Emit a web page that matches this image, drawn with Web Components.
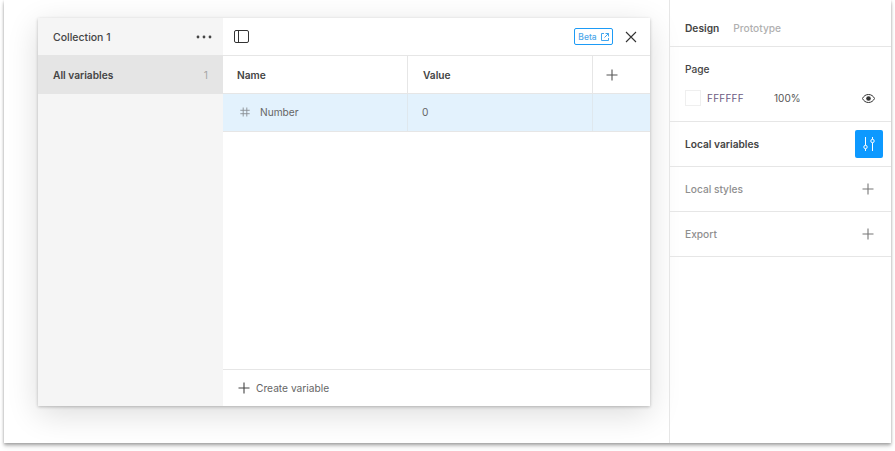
<!DOCTYPE html>
<html>
<head>
<meta charset="utf-8">
<style>
html, body { margin: 0; height: 100%; background: #fff; overflow: hidden; }
body { font-family: Inter, "Liberation Sans", sans-serif; color: #333; }
</style>
</head>
<body>
<app-frame>
    <var-dialog slot="canvas"></var-dialog>
    <design-panel slot="panel"></design-panel>
</app-frame>

<script>
const plusIcon = (color) => `<svg width="12" height="12" viewBox="0 0 12 12" fill="none" stroke="${color}" stroke-width="1.1"><path d="M6 .5v11M.5 6h11"/></svg>`;

class AppFrame extends HTMLElement {
    connectedCallback() {
        let shadowRoot = this.attachShadow({mode: 'open'});
        shadowRoot.innerHTML = `
            <style>
:host { display: block; width: 895px; height: 451px; padding: 0 4px 8px 4px; box-sizing: border-box; background: #fff; }
.window {
    display: flex;
    height: 100%;
    background: #fff;
    box-shadow: 0 2px 3px 0 rgb(0 0 0 / 28%), 0 4px 5px 0 rgb(0 0 0 / 10%), 0 0 2px 0 rgb(0 0 0 / 8%);
}
.canvas { width: 665px; flex: none; padding: 18px 0 0 34px; box-sizing: border-box; }
.panel { flex: 1; min-width: 0; border-left: 1px solid #e6e6e6; }
</style>
            <div class="window">
                <div class="canvas"><slot name="canvas"></slot></div>
                <div class="panel"><slot name="panel"></slot></div>
            </div>
        `;
    }
}

class VarDialog extends HTMLElement {
    connectedCallback() {
        let shadowRoot = this.attachShadow({mode: 'open'});
        shadowRoot.innerHTML = `
            <style>
:host {
    display: flex;
    width: 612px;
    height: 388px;
    background: #fff;
    box-shadow: 0 1px 3px rgb(0 0 0 / 24%), 0 8px 30px rgb(0 0 0 / 14%);
    font-size: 10.2px;
}
.side { width: 185px; flex: none; background: #f5f5f5; }
.side-top { height: 37px; display: flex; align-items: center; justify-content: space-between; padding: 1px 11px 0 15px; box-sizing: border-box; color: #444; font-weight: 500; font-size: 10.5px; }
.side-item { height: 39px; display: flex; align-items: center; justify-content: space-between; padding: 0 15px; background: #e5e5e5; color: #444; font-weight: 600; }
.count { color: #a6a6a6; font-weight: 400; }
.main { flex: 1; min-width: 0; display: flex; flex-direction: column; }
.top { height: 37px; flex: none; display: flex; align-items: center; padding: 0 13px 0 11px; border-bottom: 1px solid #e6e6e6; }
.beta {
    margin-left: auto;
    height: 15px;
    width: 37px;
    border: 1px solid #1d9bf6;
    border-radius: 2px;
    display: flex;
    align-items: center;
    justify-content: center;
    gap: 4px;
    color: #4da7ea;
    font-size: 8.5px;
    font-weight: 500;
}
.close { margin-left: 12px; display: flex; }
.row { display: grid; grid-template-columns: 185px 185px 1fr; height: 37px; flex: none; border-bottom: 1px solid #e6e6e6; }
.cell { display: flex; align-items: center; padding-left: 15px; border-right: 1px solid #e6e6e6; }
.cell:first-child { padding-left: 14px; }
.cell:last-child { border-right: 0; padding-left: 13px; }
.head { color: #444; font-weight: 600; }
.sel { background: #e3f2fd; color: #666; }
.sel .cell { border-color: #dfe8ee; padding-bottom: 2px; }
.sel .cell:nth-child(2) { padding-left: 14px; }
.hash { color: #8a8f94; margin: 0 10px 0 3px; display: flex; }
.spacer { flex: 1; }
.foot { height: 36px; flex: none; border-top: 1px solid #e6e6e6; display: flex; align-items: center; gap: 6px; padding-left: 15px; color: #666; }
.foot svg { display: block; }
</style>
            <div class="side">
                <div class="side-top">
                    <span>Collection 1</span>
                    <svg width="16" height="4" viewBox="0 0 16 4" fill="#444"><circle cx="2" cy="2" r="1.4"/><circle cx="8" cy="2" r="1.4"/><circle cx="14" cy="2" r="1.4"/></svg>
                </div>
                <div class="side-item"><span>All variables</span><span class="count">1</span></div>
            </div>
            <div class="main">
                <div class="top">
                    <svg width="15" height="14" viewBox="0 0 15 14" fill="none" stroke="#333"><rect x=".5" y=".5" width="14" height="12" rx="1.5"/><path d="M4.500 .5v12"/></svg>
                    <span class="beta">Beta
                        <svg width="8" height="8" viewBox="0 0 8 8" fill="none" stroke="#2d9cec" stroke-width=".9"><path d="M3 .5H.5v7h7V5M4.500 .5h3v3M7.500 .5L3.500 4.500"/></svg>
                    </span>
                    <span class="close"><svg width="12" height="12" viewBox="0 0 12 12" fill="none" stroke="#333" stroke-width="1.1"><path d="M1 1l10 10M11 1L1 11"/></svg></span>
                </div>
                <div class="row head">
                    <div class="cell">Name</div>
                    <div class="cell">Value</div>
                    <div class="cell">${plusIcon('#555')}</div>
                </div>
                <div class="row sel">
                    <div class="cell">
                        <span class="hash"><svg width="10" height="10" viewBox="0 0 10 10" fill="none" stroke="currentColor" stroke-width=".9"><path d="M3.200 .5v9M6.800 .5v9M.3 3.300h9.400M.3 6.700h9.400"/></svg></span>
                        Number
                    </div>
                    <div class="cell">0</div>
                    <div class="cell"></div>
                </div>
                <div class="spacer"></div>
                <div class="foot">${plusIcon('#444')}<span>Create variable</span></div>
            </div>
        `;
    }
}

class DesignPanel extends HTMLElement {
    connectedCallback() {
        let shadowRoot = this.attachShadow({mode: 'open'});
        shadowRoot.innerHTML = `
            <style>
:host { display: block; font-size: 10.2px; color: #444; }
.sec { border-bottom: 1px solid #e6e6e6; box-sizing: border-box; padding: 0 17px 0 15px; display: flex; align-items: center; justify-content: space-between; height: 45px; }
.tabs { justify-content: flex-start; gap: 14px; height: 47px; padding-top: 10px; font-weight: 600; }
.tabs span + span { color: #b0b0b0; font-weight: 500; }
.page { display: block; height: 75px; padding: 15px 16px 0 15px; }
.page-title { font-weight: 500; line-height: 14px; }
.fill { display: flex; align-items: center; margin-top: 14px; height: 16px; }
.swatch { width: 14px; height: 14px; border: 1px solid #efefef; margin-right: 6px; }
.hex { color: #6b5a82; width: 67px; font-size: 10px; letter-spacing: .25px; }
.pct { color: #555; font-size: 10px; }
.eye { margin-left: auto; display: flex; }
.strong { font-weight: 600; }
.mute { color: #8f8f8f; font-weight: 500; }
.vars { padding-right: 8px; }
.vars-btn { width: 28px; height: 28px; background: #0d99ff; border-radius: 2px; display: flex; align-items: center; justify-content: center; }
</style>
            <div class="sec tabs"><span>Design</span><span>Prototype</span></div>
            <div class="sec page">
                <div class="page-title">Page</div>
                <div class="fill">
                    <span class="swatch"></span>
                    <span class="hex">FFFFFF</span>
                    <span class="pct">100%</span>
                    <span class="eye"><svg width="13" height="9" viewBox="0 0 13 9"><path d="M.4 4.500C1.800 1.900 3.900 .5 6.500 .5s4.700 1.400 6.100 4c-1.400 2.600-3.500 4-6.100 4s-4.700-1.400-6.100-4z" fill="none" stroke="#333" stroke-width="1"/><circle cx="6.500" cy="4.500" r="2.300" fill="#333"/></svg></span>
                </div>
            </div>
            <div class="sec vars"><span class="strong">Local variables</span>
                <span class="vars-btn"><svg width="14" height="16" viewBox="0 0 14 16" fill="none" stroke="#fff" stroke-width="1"><path d="M3.500 1v8.300M3.500 12.700V15M10.500 1v2.300M10.500 6.700V15"/><circle cx="3.500" cy="11" r="1.700"/><circle cx="10.500" cy="5" r="1.700"/></svg></span>
            </div>
            <div class="sec"><span class="mute">Local styles</span>${plusIcon('#777')}</div>
            <div class="sec"><span class="mute">Export</span>${plusIcon('#777')}</div>
        `;
    }
}

window.customElements.define('app-frame', AppFrame);
window.customElements.define('var-dialog', VarDialog);
window.customElements.define('design-panel', DesignPanel);
</script>
</body>
</html>
